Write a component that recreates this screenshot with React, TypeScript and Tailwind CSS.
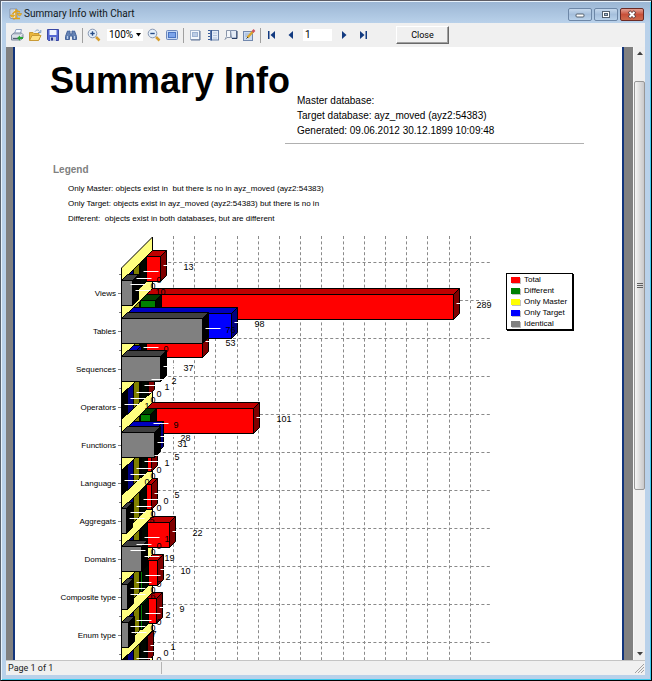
import React from 'react'

type Series = { name: string; depth: number; front: string; top: string; side: string }

// back to front
const series: Series[] = [
  { name: 'Total', depth: 25, front: '#ff0000', top: '#bf0000', side: '#800000' },
  { name: 'Different', depth: 19, front: '#008000', top: '#004000', side: '#000800' },
  { name: 'Only Master', depth: 12, front: '#ffff00', top: '#bfbf00', side: '#808000' },
  { name: 'Only Target', depth: 6, front: '#0000ff', top: '#0000bf', side: '#000080' },
  { name: 'Identical', depth: 0, front: '#808080', top: '#404040', side: '#000000' },
]

// values follow the order of `series`; marks are the captions beside the bars
const categories = [
  { label: 'Views', values: [13, 0, 0, 0, 10], marks: ['13', '', '0', '0', '10'] },
  { label: 'Tables', values: [289, 14, 0, 98, 76], marks: ['289', '', '', '98', '76'] },
  { label: 'Sequences', values: [53, 0, 0, 8, 37], marks: ['53', '0', '', '', '37'] },
  { label: 'Operators', values: [2, 1, 0, 0, 0], marks: ['2', '1', '0', '0', '1'] },
  { label: 'Functions', values: [101, 9, 0, 28, 31], marks: ['101', '9', '', '28', '31'] },
  { label: 'Language', values: [5, 1, 0, 0, 0], marks: ['5', '1', '0', '0', '0'] },
  { label: 'Aggregats', values: [5, 0, 0, 0, 5], marks: ['5', '0', '0', '0', '5'] },
  { label: 'Domains', values: [22, 1, 0, 0, 19], marks: ['22', '1', '0', '0', '19'] },
  { label: 'Composite type', values: [10, 2, 0, 0, 6], marks: ['10', '2', '0', '0', '6'] },
  { label: 'Enum type', values: [9, 2, 0, 0, 7], marks: ['9', '2', '0', '0', '7'] },
  { label: '', values: [1, 0, 0, 0, 0], marks: ['1', '0', '0', '', ''] },
]

const ORIGIN = 121.5
const SCALE = 1.062
const PITCH = 38
const HALF = 12.5

const rowY = (i: number) => 293 + i * PITCH
const barEnd = (s: Series, v: number) => ORIGIN + s.depth + Math.round(v * SCALE)

function Bar({ s, value, row }: { s: Series; value: number; row: number }) {
  const x0 = ORIGIN + s.depth
  const x1 = barEnd(s, value)
  const y0 = rowY(row) - s.depth - HALF + (s.depth > 0 ? 1 : 0)
  const y1 = y0 + HALF * 2
  return (
    <g stroke="#000" strokeWidth="1">
      {value > 0 && <polygon fill={s.top} points={`${x0},${y0} ${x0 + 6},${y0 - 6} ${x1 + 6},${y0 - 6} ${x1},${y0}`} />}
      <polygon fill={s.side} points={`${x1},${y0} ${x1 + 6},${y0 - 6} ${x1 + 6},${y1 - 6} ${x1},${y1}`} />
      {value > 0 && <rect fill={s.front} x={x0} y={y0} width={x1 - x0} height={y1 - y0} />}
    </g>
  )
}

function BarChart() {
  const columns = Array.from({ length: 15 }, (_, i) => Math.round(174 + i * 21.2) - 0.5)
  return (
    <svg className="block shrink-0" width="480" height="430" viewBox="15 230 480 430" role="img" aria-label="Summary chart" fontFamily='"Liberation Sans", Arial, sans-serif'>
      <g stroke="#8a8a8a" strokeDasharray="3 2.4">
        {columns.map((x) => (
          <line key={x} x1={x} x2={x} y1="236" y2="662" />
        ))}
        {categories.map((_, i) => (
          <line key={i} x1="152" x2="490" y1={262.5 + i * PITCH} y2={262.5 + i * PITCH} />
        ))}
      </g>
      <polygon points="121.5,268 152.5,237 152.5,680 121.5,711" fill="#ffff80" stroke="#000" />
      {series.map((s, si) => (
        <g key={s.name}>
          {categories.map((c, ci) => (
            <Bar key={ci} s={s} value={c.values[si]} row={ci} />
          ))}
        </g>
      ))}
      {series.map((s, si) => (
        <g key={s.name}>
          {categories.map((c, ci) => {
            const x = barEnd(s, c.values[si]) + 3
            const y = rowY(ci) - s.depth - 2.5
            if (!c.marks[si]) {
              return si === 1 && ci === 0 ? <line key={ci} x1={x} x2={x + 15} y1={y} y2={y} stroke="#fff" /> : null
            }
            return (
              <g key={ci}>
                <line x1={x} x2={x + 15} y1={y} y2={y} stroke="#fff" />
                <text x={x + 20} y={y + 4} fontSize="9">{c.marks[si]}</text>
              </g>
            )
          })}
        </g>
      ))}
      <line x1="121.5" x2="121.5" y1="268" y2="662" stroke="#000" />
      {categories.map((c, i) => (
        <g key={i}>
          <line x1="118" x2="121" y1={rowY(i) + 0.5} y2={rowY(i) + 0.5} stroke="#808080" />
          <line x1="119" x2="121" y1={rowY(i) - 18.5} y2={rowY(i) - 18.5} stroke="#808080" />
          <text x="116" y={rowY(i) + 3} fontSize="8" textAnchor="end">{c.label}</text>
        </g>
      ))}
    </svg>
  )
}

function Icon({ children }: { children: React.ReactNode }) {
  return (
    <svg width="14" height="14" viewBox="0 0 14 14" fill="none" aria-hidden="true">{children}</svg>
  )
}

const PrintIcon = () => (
  <Icon>
    <path d="M4.500 5.500L6 1.500H11.500L10.500 5.500Z" fill="#f4f8ff" stroke="#8da0c2" />
    <path d="M1.500 7L4 5H11.500L13 6.500V10L10.500 12H1.500Z" fill="#c3cad6" stroke="#7b879c" />
    <path d="M2 8H10L12.500 6" stroke="#f2f5fa" />
    <path d="M3 10.500H8" stroke="#52606f" />
    <path d="M7 10L10 7.500V9H13V11H10V12.800Z" fill="#29a636" />
  </Icon>
)
const OpenIcon = () => (
  <Icon>
    <path d="M1.500 12V4.500H5L6 5.500H11V12Z" fill="#e9b53c" stroke="#c79a35" />
    <path d="M1.500 12.500L4 7.500H13L10.500 12.500Z" fill="#ffe082" stroke="#c99a35" />
    <path d="M7 3.500C8.500 1.500 10.500 1.500 11.500 3.500M12.800 2V4.500H10" stroke="#7b9cc9" />
  </Icon>
)
const SaveIcon = () => (
  <Icon>
    <path d="M1.500 1.500H12.500V12.500H2.500L1.500 11.500Z" fill="#5568d4" stroke="#3a48a4" />
    <rect x="3.500" y="2" width="7" height="5" fill="#eef3ff" />
    <rect x="4" y="9" width="6" height="4" fill="#c4cce0" />
    <rect x="5" y="9.500" width="2" height="3" fill="#26348e" />
  </Icon>
)
const FindIcon = () => (
  <Icon>
    <path d="M3.500 3H6V6H8V3H10.500L12.500 8.500V11.500H8.500V8H5.500V11.500H1.500V8.500Z" fill="#6583b4" stroke="#46649a" />
    <path d="M4 2.500H5.500M8.500 2.500H10M3.500 8V11M10.500 8V11" stroke="#b8cdea" />
  </Icon>
)
const ZoomIcon = ({ plus }: { plus?: boolean }) => (
  <Icon>
    <path d="M9 9L12.500 12.500" stroke="#d59d2f" strokeWidth="2.500" />
    <circle cx="5.500" cy="5.500" r="4.300" fill="#e4effb" stroke="#8797b2" />
    <path d="M3.300 5.500H7.700" stroke="#244a86" strokeWidth="1.400" />
    {plus && <path d="M5.500 3.300V7.700" stroke="#244a86" strokeWidth="1.400" />}
  </Icon>
)
const FullIcon = () => (
  <Icon>
    <rect x="1.500" y="2.500" width="11" height="9" rx="1" fill="#c5d8f5" stroke="#6b87bb" />
    <rect x="3.500" y="4.500" width="7" height="5" fill="#7ba3ea" stroke="#4a74c2" />
  </Icon>
)
const PageIcon = () => (
  <Icon>
    <rect x="2.500" y="2.500" width="9" height="9" fill="#f3f7fd" stroke="#a5b5cd" />
    <rect x="4.500" y="4.500" width="5" height="4" fill="#bccde6" stroke="#9db2d2" />
    <path d="M3 12H12V3" stroke="#5e7296" />
  </Icon>
)
const OutlineIcon = () => (
  <Icon>
    <rect x="5.500" y="2.500" width="7" height="9.500" fill="#e4ecf7" stroke="#6981a9" />
    <path d="M7 5H11M7 7.500H11M7 10H11" stroke="#b5c4dc" />
    <path d="M2 2.500H4M2 5.500H4M2 8.500H4M2 11.500H4" stroke="#375b9a" />
    <path d="M5 2V12.500" stroke="#254a8c" strokeWidth="1.500" />
  </Icon>
)
const ThumbsIcon = () => (
  <Icon>
    <path d="M2.500 2.500H6.500V9.500H3L1 11.500M2.500 2.500V8.500L1 11.500" stroke="#8a96aa" fill="#f3f6fa" />
    <path d="M6.500 2.500H12.500V10H7.500Z" fill="#e3eaf5" stroke="#7f90ae" />
    <path d="M8 10.500H13V3" stroke="#253b63" />
  </Icon>
)
const EditIcon = () => (
  <Icon>
    <rect x="1.500" y="3.500" width="9" height="9" fill="#c9daf1" stroke="#7288ad" />
    <path d="M3 6H8M3 8H6" stroke="#9aafd0" />
    <path d="M5.500 9.500L11 3.500" stroke="#d9a52d" strokeWidth="2.500" />
    <path d="M10.500 4L12.500 2" stroke="#cf5360" strokeWidth="2.500" />
    <path d="M4.500 10.500L6 9" stroke="#333" />
  </Icon>
)
const NavIcon = ({ left, bar }: { left?: boolean; bar?: boolean }) => (
  <Icon>
    <g fill="#123a80">
      {left ? <path d="M10 3V11L5.500 7Z" /> : <path d="M4 3V11L8.500 7Z" />}
      {bar && <rect x={left ? 3 : 9.500} y="3" width="1.500" height="8" />}
    </g>
  </Icon>
)

function ToolButton({ label, children }: { label: string; children: React.ReactNode }) {
  return (
    <button type="button" aria-label={label} className="flex h-5 w-[18px] shrink-0 items-center justify-center">
      {children}
    </button>
  )
}

const Separator = () => <div className="mx-0.5 h-[15px] w-px shrink-0 bg-[#a0a0a0]" />

function TitleBar() {
  return (
    <header className="flex h-[22px] shrink-0 items-center px-[7px] pt-1">
      <svg width="14" height="14" viewBox="0 0 14 14" fill="none" aria-hidden="true">
        <path d="M2 2H9V11L6 12L2 11Z" fill="#e9eef4" stroke="#8291a6" />
        <path d="M3 4H6M3 6H6M3 8H6" stroke="#a8b4c4" />
        <path d="M8 2V11M5 11.500H12M4.500 7L8 3.500L12 5" stroke="#dfa017" strokeWidth="1.500" />
        <path d="M2.500 8H6.500C6 11 3 11 2.500 8ZM9.500 6.500H13.500C13 9.500 10 9.500 9.500 6.500Z" fill="#f6bd2c" stroke="#c68b10" strokeWidth=".6" />
      </svg>
      <h2 className="ml-0.5 flex-1 text-[10px] leading-3 text-[#101820]">Summary Info with Chart</h2>
      <div className="flex gap-0.5">
        <button type="button" aria-label="Minimize" className="flex h-[13px] w-6 items-center justify-center rounded-[2px] border border-[#6d87a7] bg-linear-to-b from-[#c5d8ed] via-[#a5bfdc] to-[#b9d2eb]">
          <svg width="10" height="9" viewBox="0 0 10 9"><rect x="1" y="4" width="8" height="3" rx="1" fill="#fff" stroke="#53616f" /></svg>
        </button>
        <button type="button" aria-label="Maximize" className="flex h-[13px] w-6 items-center justify-center rounded-[2px] border border-[#6d87a7] bg-linear-to-b from-[#c5d8ed] via-[#a5bfdc] to-[#b9d2eb]">
          <svg width="10" height="9" viewBox="0 0 10 9" fill="none"><rect x="1.500" y="1.500" width="7" height="6" fill="#fff" stroke="#53616f" /><rect x="3.500" y="3.500" width="3" height="2" fill="#9cb6d3" stroke="#53616f" /></svg>
        </button>
        <button type="button" aria-label="Close window" className="flex h-[13px] w-6 items-center justify-center rounded-[2px] border border-[#6b2a24] bg-linear-to-b from-[#e3a094] via-[#c9503a] to-[#cf6a4c]">
          <svg width="10" height="9" viewBox="0 0 10 9" fill="none"><path d="M2 1.500L8 7.500M8 1.500L2 7.500" stroke="#5c3a3a" strokeWidth="3.500" /><path d="M2.500 2L7.500 7M7.500 2L2.500 7" stroke="#fff" strokeWidth="2" /></svg>
        </button>
      </div>
    </header>
  )
}

function Toolbar() {
  return (
    <div className="flex h-6 shrink-0 items-center bg-[#f0f0f0] pl-0.5">
      <ToolButton label="Print"><PrintIcon /></ToolButton>
      <ToolButton label="Open"><OpenIcon /></ToolButton>
      <ToolButton label="Save"><SaveIcon /></ToolButton>
      <ToolButton label="Find"><FindIcon /></ToolButton>
      <Separator />
      <ToolButton label="Zoom in"><ZoomIcon plus /></ToolButton>
      <div className="relative ml-1 h-3 w-9 shrink-0">
        <select aria-label="Zoom" defaultValue="100%" className="block h-3 w-full appearance-none overflow-hidden bg-white py-0 pr-0 pl-0.5 text-[10px] leading-3">
          <option>50%</option>
          <option>100%</option>
          <option>200%</option>
        </select>
        <svg className="pointer-events-none absolute top-1 right-0.5" width="5" height="4" viewBox="0 0 5 4"><path d="M0 0H5L2.500 3.500Z" /></svg>
      </div>
      <div className="w-0.5 shrink-0" />
      <ToolButton label="Zoom out"><ZoomIcon /></ToolButton>
      <ToolButton label="Full screen"><FullIcon /></ToolButton>
      <Separator />
      <ToolButton label="Page settings"><PageIcon /></ToolButton>
      <ToolButton label="Outline"><OutlineIcon /></ToolButton>
      <ToolButton label="Thumbnails"><ThumbsIcon /></ToolButton>
      <ToolButton label="Edit page"><EditIcon /></ToolButton>
      <Separator />
      <ToolButton label="First page"><NavIcon left bar /></ToolButton>
      <ToolButton label="Previous page"><NavIcon left /></ToolButton>
      <input aria-label="Page number" defaultValue="1" className="ml-1 h-3 w-[29px] shrink-0 bg-white px-0.5 text-[10px] leading-3" />
      <div className="w-1 shrink-0" />
      <ToolButton label="Next page"><NavIcon /></ToolButton>
      <ToolButton label="Last page"><NavIcon bar /></ToolButton>
      <button type="button" className="ml-6 h-[18px] w-[53px] shrink-0 border border-t-white border-r-[#696969] border-b-[#696969] border-l-white text-[9px] leading-3 shadow-[inset_-1px_-1px_0_#a0a0a0]">
        Close
      </button>
    </div>
  )
}

function ChartLegend() {
  const swatches = ['bg-[#ff0000]', 'bg-[#008000]', 'bg-[#ffff00]', 'bg-[#0000ff]', 'bg-[#808080]']
  return (
    <ul className="mt-[43px] ml-[11px] h-[57px] w-[67px] shrink-0 border border-black bg-white shadow-[1px_1px_0_0_#000]">
      {series.map((s, i) => (
        <li key={s.name} className="flex h-[11px] items-center gap-1 pl-1 text-[8px] leading-[11px]">
          <span className={`h-1.5 w-[9px] shadow-[1px_1px_0_#c0c0c0] ${swatches[i]}`} />
          <span className="whitespace-nowrap">{s.name}</span>
        </li>
      ))}
    </ul>
  )
}

function Report() {
  return (
    <main className="min-w-0 flex-1 overflow-hidden border-x-2 border-[#12357c] bg-white font-['Liberation_Sans',Arial,sans-serif] text-black">
      <div className="flex pt-4 pr-[38px] pl-[35px]">
        <h1 className="w-[235px] shrink-0 text-4xl leading-9 font-bold whitespace-nowrap">Summary Info</h1>
        <div className="mt-[30px] flex-1 border-b border-[#b0b0b0] pb-[5px] pl-3 text-[10px] leading-[15px]">
          <p>Master database:</p>
          <p>Target database: ayz_moved (ayz2:54383)</p>
          <p>Generated: 09.06.2012 30.12.1899 10:09:48</p>
        </div>
      </div>
      <section className="mt-[18px] pl-[38px]">
        <h2 className="text-[10px] leading-4 font-bold text-[#808080]">Legend</h2>
        <div className="mt-[3px] pl-[15px] text-[8px] leading-[15px] whitespace-pre">
          <p>Only Master: objects exist in  but there is no in ayz_moved (ayz2:54383)</p>
          <p>Only Target: objects exist in ayz_moved (ayz2:54383) but there is no in</p>
          <p>Different:  objects exist in both databases, but are different</p>
        </div>
      </section>
      <section className="mt-1 flex items-start">
        <BarChart />
        <ChartLegend />
      </section>
    </main>
  )
}

function ScrollBar() {
  return (
    <div className="flex w-3 shrink-0 flex-col items-center border-l border-[#f8f8f8] bg-[#efefef]">
      <div className="flex h-3 items-center">
        <svg width="6" height="4" viewBox="0 0 6 4"><path d="M0 4L3 0.500L6 4Z" fill="#404040" /></svg>
      </div>
      <div className="flex-[22]" />
      <div className="flex w-full flex-[408] flex-col items-center justify-center gap-px rounded-[2px] border border-[#979797] bg-linear-to-r from-[#f5f5f5] via-[#dedede] to-[#c9c9cb]">
        <div className="h-px w-1.5 bg-[#606060]" />
        <div className="h-px w-1.5 bg-[#606060]" />
        <div className="h-px w-1.5 bg-[#606060]" />
      </div>
      <div className="flex-[158]" />
      <div className="flex h-3 items-center">
        <svg width="6" height="4" viewBox="0 0 6 4"><path d="M0 0L3 3.500L6 0Z" fill="#404040" /></svg>
      </div>
    </div>
  )
}

export default function App() {
  return (
    <div className="flex h-screen flex-col border border-t-[#5e5e66] border-r-black border-b-black border-l-[#5a6470] bg-linear-to-b from-[#9ab5d3] to-[#b9d1ea] to-[22px] font-[Roboto,'Noto_Sans',sans-serif] shadow-[inset_1px_1px_0_#e8f2fb,inset_-1px_-1px_0_#3ecbee]">
      <TitleBar />
      <div className="mr-1.5 mb-[5px] ml-[5px] flex min-h-0 flex-1 flex-col">
        <Toolbar />
        <div className="flex min-h-0 flex-1 bg-[#808080] pl-[7px]">
          <Report />
          <div className="w-[9px] shrink-0" />
          <ScrollBar />
        </div>
        <footer className="flex h-[15px] shrink-0 items-center border-t border-[#c4c4c4] bg-[#f0f0f0] text-[9px] leading-3 text-[#202020]">
          <span className="w-[156px] border-r border-[#b4b4b4] pl-0.5">Page 1 of 1</span>
          <svg className="ml-auto" width="11" height="11" viewBox="0 0 11 11"><path d="M1 10L10 1M4 10L10 4M7 10L10 7" stroke="#a0a0a0" /></svg>
        </footer>
      </div>
    </div>
  )
}
